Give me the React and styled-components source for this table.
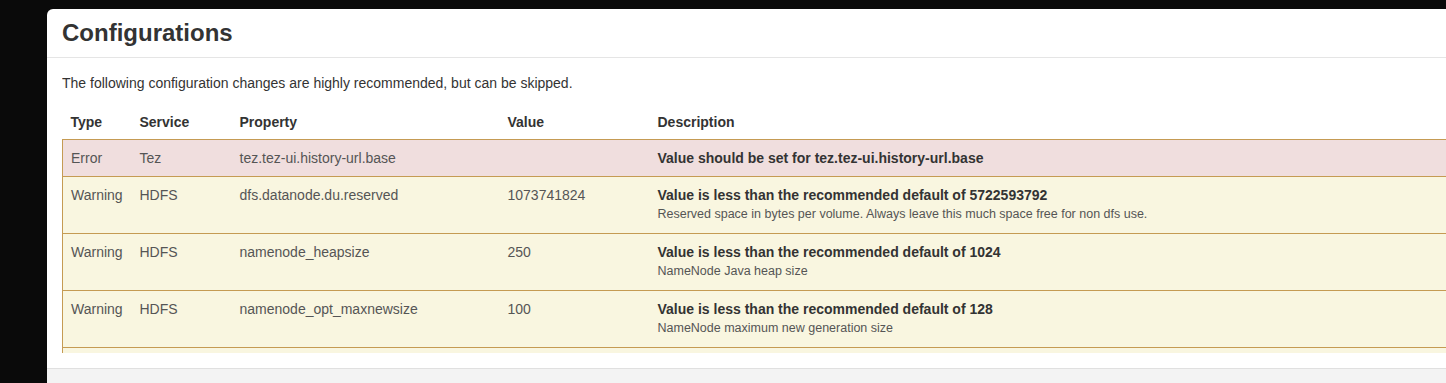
import styled, { createGlobalStyle } from "styled-components";

const GlobalStyle = createGlobalStyle`
  html, body {
    margin: 0;
    padding: 0;
    background: #0a0a0a;
    overflow: hidden;
    font-family: "Liberation Sans", Arial, sans-serif;
  }
`;

const Page = styled.div`
  height: 383px;
  padding: 9px 0 0 47px;
  box-sizing: border-box;
  overflow: hidden;
`;

const Modal = styled.div`
  width: 1500px;
  background: #fff;
  border-radius: 6px 0 0 0;
  overflow: hidden;
`;

const Header = styled.div`
  padding: 12px 15px;
  border-bottom: 1px solid #e5e5e5;
`;

const Title = styled.h4`
  margin: 0;
  font-size: 24px;
  line-height: 24px;
  font-weight: bold;
  color: #333;
`;

const Body = styled.div`
  padding: 15px;
`;

const Scroller = styled.div`
  height: 280px;
  overflow: hidden;
`;

const Intro = styled.p`
  margin: 0 0 10px;
  font-size: 14px;
  line-height: 20px;
  color: #333;
`;

const Table = styled.table`
  width: 100%;
  border-collapse: collapse;
  table-layout: fixed;
  font-size: 14px;
`;

const Th = styled.th`
  text-align: left;
  padding: 10px 8px 8px;
  line-height: 18px;
  color: #333;
  font-weight: bold;
  border-bottom: 1px solid #c59b53;
`;

const Row = styled.tr`
  background: ${(p) => (p.$level === "Error" ? "#f0dede" : "#f9f6e0")};
  border-bottom: 1px solid #c59b53;
`;

const Td = styled.td`
  vertical-align: top;
  padding: 9px 8px;
  line-height: 18px;
  color: #555;
  &:first-child {
    border-left: 1px solid #c59b53;
  }
`;

const Message = styled.div`
  font-weight: bold;
  color: #333;
`;

const Note = styled.div`
  margin: 1px 0;
  font-size: 12.5px;
  line-height: 18px;
  color: #555;
`;

const Footer = styled.div`
  border-top: 1px solid #e0e0e0;
  background: #f3f3f3;
  height: 40px;
`;

const rows = [
  {
    type: "Error",
    service: "Tez",
    property: "tez.tez-ui.history-url.base",
    value: "",
    message: "Value should be set for tez.tez-ui.history-url.base",
  },
  {
    type: "Warning",
    service: "HDFS",
    property: "dfs.datanode.du.reserved",
    value: "1073741824",
    message: "Value is less than the recommended default of 5722593792",
    note: "Reserved space in bytes per volume. Always leave this much space free for non dfs use.",
  },
  {
    type: "Warning",
    service: "HDFS",
    property: "namenode_heapsize",
    value: "250",
    message: "Value is less than the recommended default of 1024",
    note: "NameNode Java heap size",
  },
  {
    type: "Warning",
    service: "HDFS",
    property: "namenode_opt_maxnewsize",
    value: "100",
    message: "Value is less than the recommended default of 128",
    note: "NameNode maximum new generation size",
  },
  {
    type: "Warning",
    service: "HDFS",
    property: "namenode_opt_newsize",
    value: "100",
    message: "Value is less than the recommended default of 128",
    note: "NameNode new generation size",
  },
];

export default function App() {
  return (
    <>
      <GlobalStyle />
      <Page>
        <Modal>
          <Header>
            <Title>Configurations</Title>
          </Header>
          <Body>
            <Scroller>
              <Intro>
                The following configuration changes are highly recommended, but can be skipped.
              </Intro>
              <Table>
                <colgroup>
                  <col style={{ width: 69 }} />
                  <col style={{ width: 100 }} />
                  <col style={{ width: 268 }} />
                  <col style={{ width: 150 }} />
                  <col />
                </colgroup>
                <thead>
                  <tr>
                    <Th>Type</Th>
                    <Th>Service</Th>
                    <Th>Property</Th>
                    <Th>Value</Th>
                    <Th>Description</Th>
                  </tr>
                </thead>
                <tbody>
                  {rows.map((r, i) => (
                    <Row key={i} $level={r.type}>
                      <Td>{r.type}</Td>
                      <Td>{r.service}</Td>
                      <Td>{r.property}</Td>
                      <Td>{r.value}</Td>
                      <Td>
                        <Message>{r.message}</Message>
                        {r.note && <Note>{r.note}</Note>}
                      </Td>
                    </Row>
                  ))}
                </tbody>
              </Table>
            </Scroller>
          </Body>
          <Footer />
        </Modal>
      </Page>
    </>
  );
}
